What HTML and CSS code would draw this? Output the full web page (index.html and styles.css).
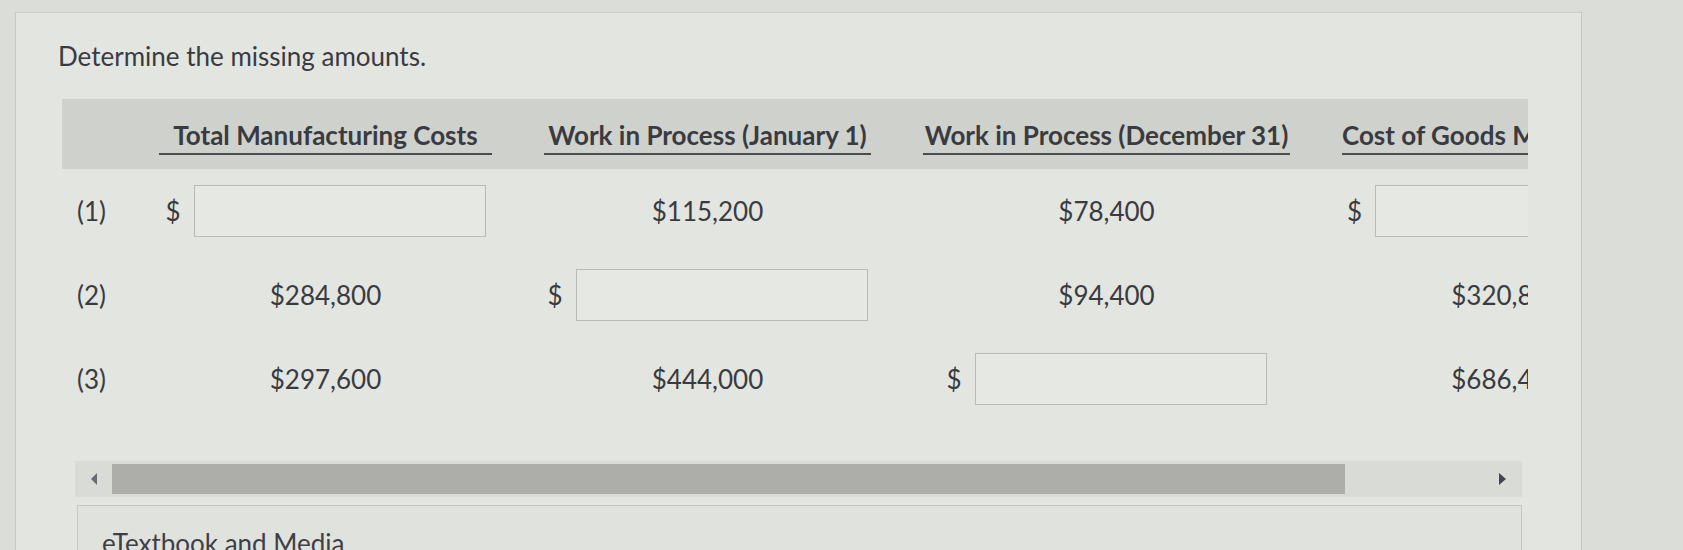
FILE: index.html
```html
<!DOCTYPE html>
<html lang="en">
<head>
<meta charset="utf-8">
<title>Determine the missing amounts</title>
<link rel="stylesheet" href="styles.css">
</head>
<body>
<div class="panel">
  <p class="prompt">Determine the missing amounts.</p>

  <div class="scroller">
    <div class="sheet">
      <div class="head">
        <div class="hcell blank"></div>
        <div class="hcell">Total Manufacturing Costs</div>
        <div class="hcell">Work in Process (January 1)</div>
        <div class="hcell">Work in Process (December 31)</div>
        <div class="hcell">Cost of Goods Manufactured</div>
      </div>

      <div class="row">
        <div class="label">(1)</div>
        <div class="entry"><span class="cur">$</span><span class="box"></span></div>
        <div class="val">$115,200</div>
        <div class="val">$78,400</div>
        <div class="entry"><span class="cur">$</span><span class="box"></span></div>
      </div>

      <div class="row">
        <div class="label">(2)</div>
        <div class="val">$284,800</div>
        <div class="entry"><span class="cur">$</span><span class="box"></span></div>
        <div class="val">$94,400</div>
        <div class="val">$320,800</div>
      </div>

      <div class="row">
        <div class="label">(3)</div>
        <div class="val">$297,600</div>
        <div class="val">$444,000</div>
        <div class="entry"><span class="cur">$</span><span class="box"></span></div>
        <div class="val">$686,400</div>
      </div>
    </div>
  </div>

  <div class="hscroll">
    <div class="arrow-btn left"><span class="tri-left"></span></div>
    <div class="thumb"></div>
    <div class="rest"><span class="tri-right"></span></div>
  </div>

  <div class="media">eTextbook and Media</div>
</div>
</body>
</html>
```

FILE: styles.css
```css
html, body {
  margin: 0;
  padding: 0;
}

body {
  background: #dbddd9;
  font-family: Lato, "Open Sans", "Liberation Sans", sans-serif;
  color: #3a3b40;
  height: 550px;
  overflow: hidden;
}

.panel {
  margin: 12px 0 0 15px;
  width: 1565px;
  height: 600px;
  background: #e3e5e1;
  border-top: 1px solid #cbcdc9;
  border-left: 1px solid #c6c8c4;
  border-right: 1px solid #c3c5c1;
}

.prompt {
  margin: 27px 0 0 42px;
  font-size: 26px;
  line-height: 32px;
}

.scroller {
  margin: 27px 0 0 46px;
  width: 1466px;
  overflow: hidden;
}

.sheet {
  width: 1609px;
}

.head,
.row {
  display: grid;
  grid-template-columns: 45px 333px 327px 367px 330px;
  column-gap: 52px;
}

.head {
  height: 70px;
  background: #cfd1cd;
  align-items: end;
}

.hcell {
  margin-bottom: 14px;
  padding-bottom: 3px;
  border-bottom: 2px solid #4b4c50;
  font-size: 26px;
  font-weight: 700;
  line-height: 30px;
  text-align: center;
  white-space: nowrap;
  overflow: hidden;
}

.hcell.blank {
  border-bottom: none;
}

.row {
  height: 84px;
  align-items: center;
  font-size: 26px;
}

.label {
  padding-left: 15px;
}

.val {
  text-align: center;
  white-space: nowrap;
}

.entry {
  display: flex;
  align-items: center;
  justify-content: center;
  gap: 14px;
}

.cur {
  width: 14px;
}

.box {
  display: block;
  width: 290px;
  height: 50px;
  border: 1px solid #b9bbb7;
  background: #e6e8e4;
  flex: none;
}

.hscroll {
  margin: 40px 0 0 59px;
  width: 1447px;
  height: 36px;
  display: flex;
  background: #d9dbd6;
}

.arrow-btn {
  width: 37px;
  display: flex;
  align-items: center;
  justify-content: center;
}

.tri-left {
  width: 0;
  height: 0;
  border-top: 6px solid transparent;
  border-bottom: 6px solid transparent;
  border-right: 6px solid #6a6b70;
}

.thumb {
  width: 1233px;
  height: 30px;
  margin-top: 3px;
  background: #adaea9;
}

.rest {
  flex: 1;
  display: flex;
  align-items: center;
  justify-content: flex-end;
  padding-right: 16px;
}

.tri-right {
  width: 0;
  height: 0;
  border-top: 6px solid transparent;
  border-bottom: 6px solid transparent;
  border-left: 7px solid #44454c;
}

.media {
  margin: 8px 0 0 61px;
  width: 1395px;
  height: 80px;
  padding: 21px 24px 0;
  border: 1px solid #c4c6c2;
  background: #e0e2de;
  font-size: 26px;
  line-height: 32px;
  color: #3f4046;
}
```
